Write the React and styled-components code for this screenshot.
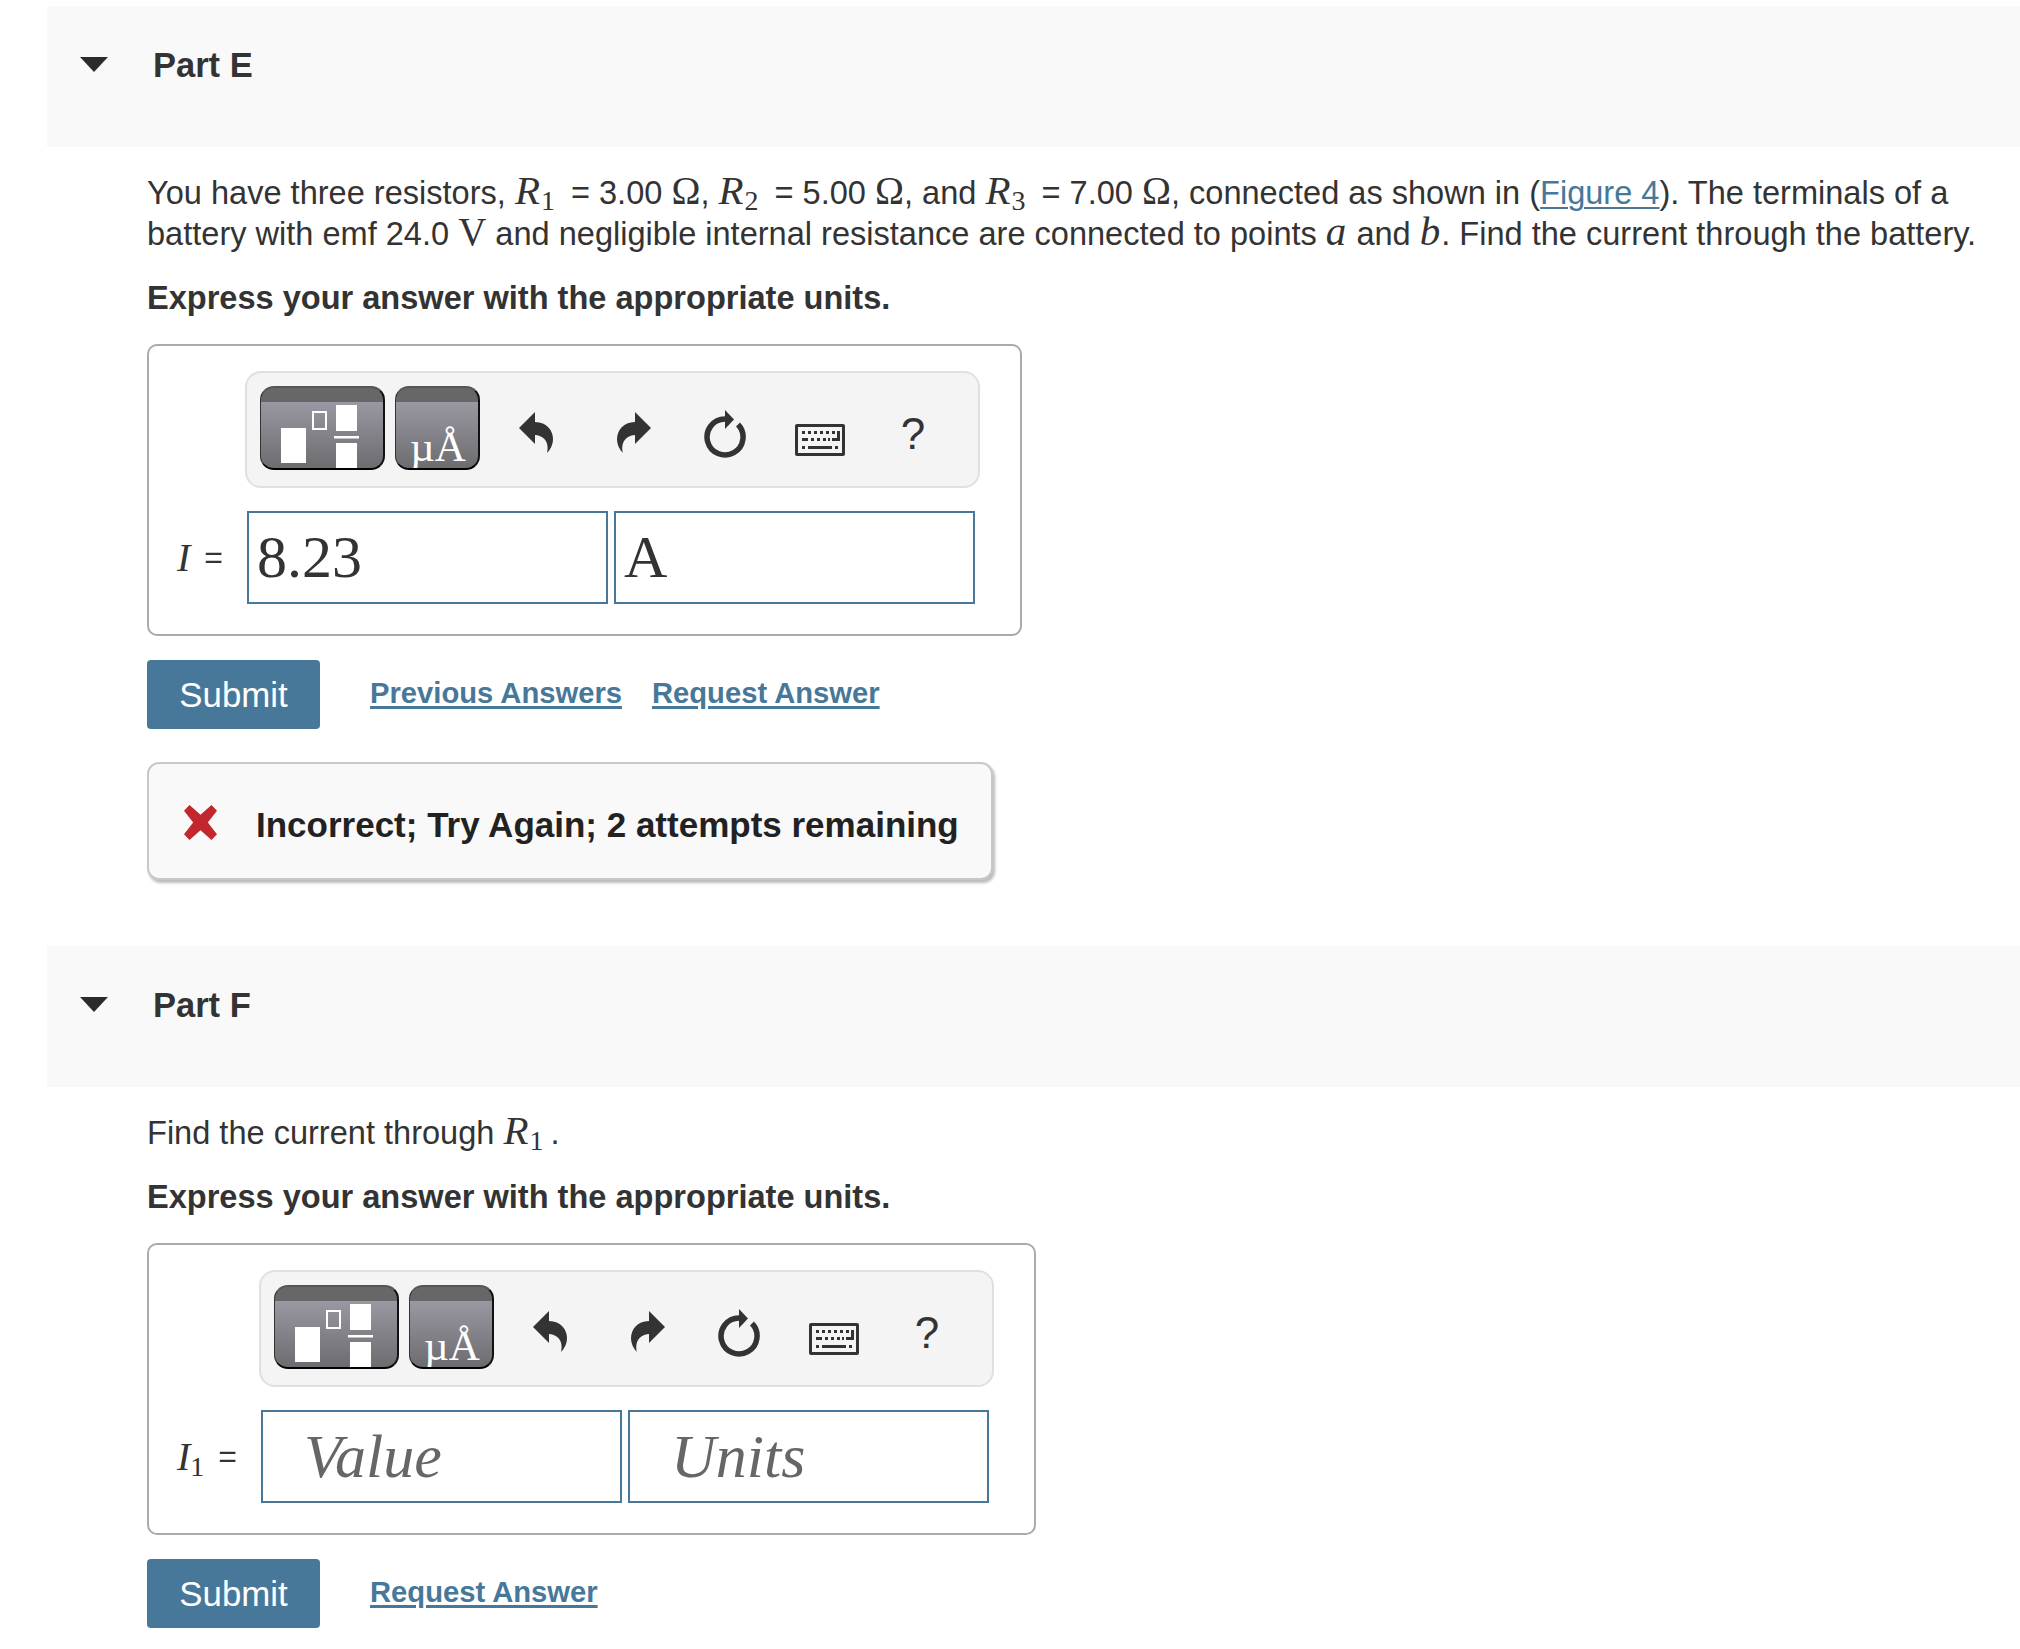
import React from 'react';
import styled, { createGlobalStyle } from 'styled-components';

const GlobalStyle = createGlobalStyle`
  html, body {
    margin: 0;
    padding: 0;
    background: #fff;
    overflow: hidden;
  }
  body {
    font-family: "Liberation Sans", Arial, sans-serif;
    color: #333;
  }
`;

const Page = styled.div`
  padding: 6px 0 0 47px;
`;

const PartHeader = styled.header`
  display: flex;
  align-items: flex-start;
  height: 141px;
  background: #f9f9f9;
  padding: 41px 0 0 33px;
  box-sizing: border-box;
`;

const Caret = styled.svg`
  width: 28px;
  height: 15px;
  margin: 10px 45px 0 0;
  fill: #2b2b2b;
`;

const PartTitle = styled.h2`
  margin: 0;
  font-size: 34.5px;
  line-height: 36px;
  font-weight: 700;
  color: #333;
`;

const PartBody = styled.div`
  padding: 26px 40px 0 100px;
`;

const Prompt = styled.p`
  margin: 0;
  font-size: 32.55px;
  line-height: 41px;
`;

const Instruction = styled.p`
  margin: 23px 0 0;
  font-size: 32.55px;
  line-height: 41px;
  font-weight: 700;
`;

const Link = styled.a`
  color: #47789a;
  text-decoration: underline;
  text-decoration-thickness: 2px;
  text-underline-offset: 3px;
`;

const MathVar = styled.i`
  font-family: "Liberation Serif", "Times New Roman", serif;
  font-size: 41px;
  line-height: 0;
  letter-spacing: 1px;
`;

const MathUnit = styled.span`
  font-family: "Liberation Serif", "Times New Roman", serif;
  font-size: 39px;
  line-height: 0;
`;

const Sub = styled.sub`
  font-family: "Liberation Serif", "Times New Roman", serif;
  font-size: 28px;
  font-style: normal;
  line-height: 0;
  vertical-align: -6px;
  margin-right: 7px;
`;

const AnswerPanel = styled.div`
  display: grid;
  grid-template-columns: auto auto;
  width: fit-content;
  margin-top: 25px;
  padding: 25px 40px 30px 28px;
  border: 2px solid #aaa;
  border-radius: 10px;
  box-sizing: border-box;
`;

const Toolbar = styled.div`
  grid-column: 2;
  display: flex;
  align-items: center;
  width: 735px;
  height: 117px;
  margin-left: -2px;
  padding: 0 0 3px 13px;
  box-sizing: border-box;
  background: #f4f4f4;
  border: 2px solid #e0e0e0;
  border-radius: 16px;
`;

const ToolButton = styled.button`
  position: relative;
  width: ${(p) => p.$width}px;
  height: 84px;
  margin-right: ${(p) => p.$gap}px;
  padding: 0;
  overflow: hidden;
  box-sizing: border-box;
  border: 0;
  border-top: 2px solid #555;
  border-right: 2px solid #111;
  border-bottom: 2px solid #000;
  border-left: 1px solid #333;
  border-radius: 14px;
  background: linear-gradient(#676767 0 14px, #9a98a2 14px, #6c6c70 100%);
`;

const TemplateIcon = styled.svg`
  display: block;
  width: 122px;
  height: 82px;
  fill: #fff;
`;

const UnitsGlyph = styled.span`
  position: absolute;
  left: 14px;
  bottom: -11px;
  font-family: "Liberation Serif", "Times New Roman", serif;
  font-size: 43px;
  line-height: 64px;
  color: #fff;
  white-space: nowrap;
`;

const IconSlot = styled.div`
  display: flex;
  justify-content: center;
  align-items: center;
  width: ${(p) => p.$width}px;
  height: 80px;
  color: #333;
  font-size: 44px;
`;

const HelpMark = styled.span`
  padding-top: 11px;
`;

const LineIcon = styled.svg`
  display: block;
  fill: #333;
  margin-top: ${(p) => p.$top || 0}px;
`;

const InputLabel = styled.div`
  display: flex;
  align-items: center;
  grid-row: 2;
  grid-column: 1;
  gap: 14px;
  padding-right: 24px;
  margin-top: 23px;
  font-size: 32px;
`;

const LabelVar = styled.i`
  font-family: "Liberation Serif", "Times New Roman", serif;
  font-size: 40px;
`;

const LabelSub = styled(Sub)`
  margin-right: 0;
`;

const InputRow = styled.div`
  display: flex;
  gap: 6px;
  grid-row: 2;
  grid-column: 2;
  margin-top: 23px;
`;

const AnswerBox = styled.div`
  display: flex;
  align-items: center;
  width: 361px;
  height: 93px;
  padding-left: ${(p) => (p.$placeholder ? 41 : 8)}px;
  box-sizing: border-box;
  border: 2px solid #47789a;
  font-family: "Liberation Serif", "Times New Roman", serif;
  font-size: ${(p) => (p.$placeholder ? 62 : 60)}px;
  font-style: ${(p) => (p.$placeholder ? 'italic' : 'normal')};
  color: ${(p) => (p.$placeholder ? '#666' : '#333')};
`;

const Actions = styled.div`
  display: flex;
  align-items: center;
  margin-top: 24px;
`;

const SubmitButton = styled.button`
  width: 173px;
  height: 69px;
  margin-right: 50px;
  padding: 0;
  border: 0;
  border-radius: 4px;
  background: #47789a;
  color: #fff;
  font-family: "Liberation Sans", Arial, sans-serif;
  font-size: 34.8px;
`;

const ActionLink = styled(Link)`
  margin: 0 30px 2px 0;
  font-size: 29.2px;
  font-weight: 700;
  text-decoration-thickness: 3px;
`;

const Feedback = styled.div`
  display: flex;
  align-items: center;
  width: 846px;
  height: 118px;
  margin-top: 33px;
  padding: 3px 0 0 35px;
  box-sizing: border-box;
  background: #f9f9f9;
  border: 2px solid #c8c8c8;
  border-radius: 12px;
  box-shadow: 2px 3px 3px #bbb;
`;

const CrossIcon = styled.svg`
  width: 33px;
  height: 35px;
  margin-right: 39px;
  fill: #c1272d;
`;

const FeedbackText = styled.span`
  margin-top: 4px;
  font-size: 35px;
  font-weight: 700;
  color: #222;
`;

const Spacer = styled.div`
  height: 66px;
`;

const CaretDown = () => (
  <Caret viewBox="0 0 28 15">
    <path d="M0 0H28L14 15Z" />
  </Caret>
);

const Undo = ({ flip }) => (
  <LineIcon width="34" height="41" viewBox="0 0 34 41" $top={9} style={flip ? { transform: 'scaleX(-1)' } : undefined}>
    <path d="M0 16 L16 0 V10 C28 10 34 19 34 27 C34 33 31 38 28 41 C30 34 28 24 16 23 V32 Z" />
  </LineIcon>
);

const Reset = () => (
  <LineIcon width="42" height="48" viewBox="0 0 42 48" $top={11}>
    <path d="M34 14.5 A18 18 0 1 1 21 9" fill="none" stroke="#333" strokeWidth="5.5" />
    <path d="M21 0 L30 9.5 L21 19 Z" />
  </LineIcon>
);

const Keyboard = () => (
  <LineIcon width="50" height="32" viewBox="0 0 50 32" $top={23}>
    <path fillRule="evenodd" d="M2 0H48A2 2 0 0 1 50 2V30A2 2 0 0 1 48 32H2A2 2 0 0 1 0 30V2A2 2 0 0 1 2 0ZM3 3V29H47V3Z" />
    <path d="M7 7h3v3H7zM13 7h3v3h-3zM19 7h3v3h-3zM25 7h3v3h-3zM31 7h3v3h-3zM37 7h3v3h-3zM42 7h3v10H37v-3h5zM7 14h6v3H7zM16 14h3v3h-3zM22 14h3v3h-3zM28 14h3v3h-3zM33 14h2v3h-2zM7 22h3v3H7zM13 22h24v3H13zM40 22h3v3h-3z" />
  </LineIcon>
);

const Cross = () => (
  <CrossIcon viewBox="0 0 36 36" preserveAspectRatio="none">
    <path d="M6 0 L18 10 L30 0 L36 6 L26 18 L36 30 L30 36 L18 26 L6 36 L0 30 L10 18 L0 6Z" />
  </CrossIcon>
);

const EditorToolbar = () => (
  <Toolbar>
    <ToolButton $width={125} $gap={10}>
      <TemplateIcon viewBox="0 0 122 82">
        <rect x="20" y="40" width="25" height="35" />
        <path fillRule="evenodd" d="M51 23H66V42H51ZM53 25V40H64V25Z" />
        <rect x="75" y="17" width="21" height="26" />
        <rect x="73" y="48" width="25" height="2.5" />
        <rect x="75" y="55" width="21" height="26" />
      </TemplateIcon>
    </ToolButton>
    <ToolButton $width={85} $gap={10}>
      <UnitsGlyph>µÅ</UnitsGlyph>
    </ToolButton>
    <IconSlot $width={92}><Undo /></IconSlot>
    <IconSlot $width={104}><Undo flip /></IconSlot>
    <IconSlot $width={78}><Reset /></IconSlot>
    <IconSlot $width={112}><Keyboard /></IconSlot>
    <IconSlot $width={74}><HelpMark>?</HelpMark></IconSlot>
  </Toolbar>
);

const Answer = ({ label, value, units, placeholder }) => (
  <AnswerPanel>
    <EditorToolbar />
    <InputLabel>{label} <span>=</span></InputLabel>
    <InputRow>
      <AnswerBox $placeholder={placeholder}>{value}</AnswerBox>
      <AnswerBox $placeholder={placeholder}>{units}</AnswerBox>
    </InputRow>
  </AnswerPanel>
);

const App = () => (
  <Page>
    <GlobalStyle />
    <PartHeader>
      <CaretDown />
      <PartTitle>Part E</PartTitle>
    </PartHeader>
    <PartBody>
      <Prompt>
        You have three resistors, <MathVar>R</MathVar><Sub>1</Sub> = 3.00 <MathUnit>Ω</MathUnit>, <MathVar>R</MathVar><Sub>2</Sub> = 5.00 <MathUnit>Ω</MathUnit>, and <MathVar>R</MathVar><Sub>3</Sub> = 7.00 <MathUnit>Ω</MathUnit>, connected as shown in (<Link>Figure 4</Link>). The terminals of a battery with emf 24.0 <MathUnit>V</MathUnit> and negligible internal resistance are connected to points <MathVar>a</MathVar> and <MathVar>b</MathVar>. Find the current through the battery.
      </Prompt>
      <Instruction>Express your answer with the appropriate units.</Instruction>
      <Answer label={<LabelVar>I</LabelVar>} value="8.23" units="A" />
      <Actions>
        <SubmitButton>Submit</SubmitButton>
        <ActionLink>Previous Answers</ActionLink>
        <ActionLink>Request Answer</ActionLink>
      </Actions>
      <Feedback>
        <Cross />
        <FeedbackText>Incorrect; Try Again; 2 attempts remaining</FeedbackText>
      </Feedback>
    </PartBody>
    <Spacer />
    <PartHeader>
      <CaretDown />
      <PartTitle>Part F</PartTitle>
    </PartHeader>
    <PartBody>
      <Prompt>Find the current through <MathVar>R</MathVar><Sub>1</Sub>.</Prompt>
      <Instruction>Express your answer with the appropriate units.</Instruction>
      <Answer label={<LabelVar>I<LabelSub>1</LabelSub></LabelVar>} value="Value" units="Units" placeholder />
      <Actions>
        <SubmitButton>Submit</SubmitButton>
        <ActionLink>Request Answer</ActionLink>
      </Actions>
    </PartBody>
  </Page>
);

export default App;
